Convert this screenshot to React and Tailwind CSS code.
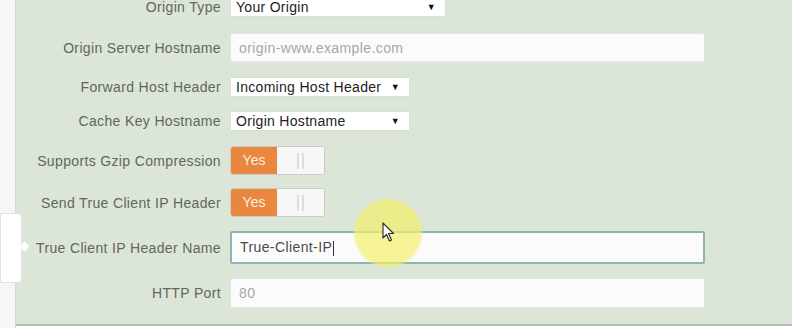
import React from "react";

function Label({ children }) {
  return (
    <div className="w-[205px] shrink-0 text-right text-[14px] leading-[16px] tracking-[0.35px] text-[#626661]">{children}</div>
  );
}

function Select({ value, width }) {
  return (
    <div
      className="flex items-center justify-between bg-white h-[20px] pl-[5px] pr-[9px] text-[14px] leading-[16px] tracking-[0.3px] text-[#222] border border-[#d9dcd8]"
      style={{ width }}
    >
      <span>{value}</span>
      <span className="text-[9px] text-[#111]">▼</span>
    </div>
  );
}

function Input({ value, placeholder, focused, h = 30 }) {
  return (
    <div
      className={
        "flex items-center w-[475px] bg-[#fbfbfc] rounded-[2px] px-[8px] text-[14px] leading-[16px] tracking-[0.4px] " +
        (focused ? "border-2 border-[#8fb5b3]" : "border border-[#e3e6e2]")
      }
      style={{ height: h }}
    >
      {value ? (
        <span className="text-[#4a4a4a]">
          {value}
          <span className="inline-block w-px h-[15px] bg-[#333] align-middle ml-px"></span>
        </span>
      ) : (
        <span className="text-[#a5a8a5]">{placeholder}</span>
      )}
    </div>
  );
}

function Toggle() {
  return (
    <div className="flex w-[95px] h-[29px] rounded-[3px] border border-[#c9cdc8] overflow-hidden bg-white">
      <div className="w-[46px] bg-[#e8873d] text-[#fbeee3] text-[14px] flex items-center justify-center">Yes</div>
      <div className="flex-1 flex items-center justify-center gap-[3px] bg-[#f7f7f7]">
        <span className="w-[2px] h-[16px] bg-[#dcdcdc]"></span>
        <span className="w-[2px] h-[16px] bg-[#dcdcdc]"></span>
      </div>
    </div>
  );
}

function Row({ label, children, className = "" }) {
  return (
    <div className={"flex items-center gap-[9px] " + className}>
      <Label>{label}</Label>
      {children}
    </div>
  );
}

export default function App() {
  return (
    <div
      className="relative w-[792px] h-[328px] overflow-hidden bg-white flex"
      style={{ fontFamily: '"Liberation Sans", Arial, sans-serif' }}
    >
      {/* left strip */}
      <div className="w-[16px] shrink-0 bg-[#f5f6f5] border-r border-[#d6d8d6]"></div>
      <div className="absolute left-0 top-[213px] w-[22px] h-[70px] bg-white border border-[#e2e4e2] rounded-r-[3px]"></div>
      <div className="absolute left-[21px] top-[243px] w-[7px] h-[7px] bg-white rotate-45"></div>

      {/* panel */}
      <div className="flex-1 h-[326px] bg-[#dbe5d8] border-b-2 border-[#b9bdb8] flex flex-col">
        <div className="flex flex-col -mt-[3px]">
          <Row label="Origin Type">
            <Select value="Your Origin" width={216} />
          </Row>
          <Row label="Origin Server Hostname" className="mt-[16px]">
            <Input placeholder="origin-www.example.com" h={29} />
          </Row>
          <Row label="Forward Host Header" className="mt-[15px]">
            <Select value="Incoming Host Header" width={180} />
          </Row>
          <Row label="Cache Key Hostname" className="mt-[14px]">
            <Select value="Origin Hostname" width={180} />
          </Row>
          <Row label="Supports Gzip Compression" className="mt-[15px]">
            <Toggle />
          </Row>
          <Row label="Send True Client IP Header" className="mt-[13px]">
            <Toggle />
          </Row>
          <Row label="True Client IP Header Name" className="mt-[14px]">
            <Input value="True-Client-IP" focused h={33} />
          </Row>
          <Row label="HTTP Port" className="mt-[14px]">
            <Input placeholder="80" h={30} />
          </Row>
        </div>
      </div>

      {/* cursor highlight */}
      <div className="absolute left-[354px] top-[199px] w-[68px] h-[68px] rounded-full bg-[#f2f06a]/70 blur-[1px] pointer-events-none"></div>
      <svg className="absolute left-[382px] top-[222px]" width="14" height="20" viewBox="0 0 14 20">
        <path d="M1 1 L1 16 L4.5 12.5 L7.5 19 L9.5 18 L6.5 11.5 L11.5 11.5 Z" fill="#fff" stroke="#333" strokeWidth="1.2" strokeLinejoin="round" />
      </svg>
    </div>
  );
}
